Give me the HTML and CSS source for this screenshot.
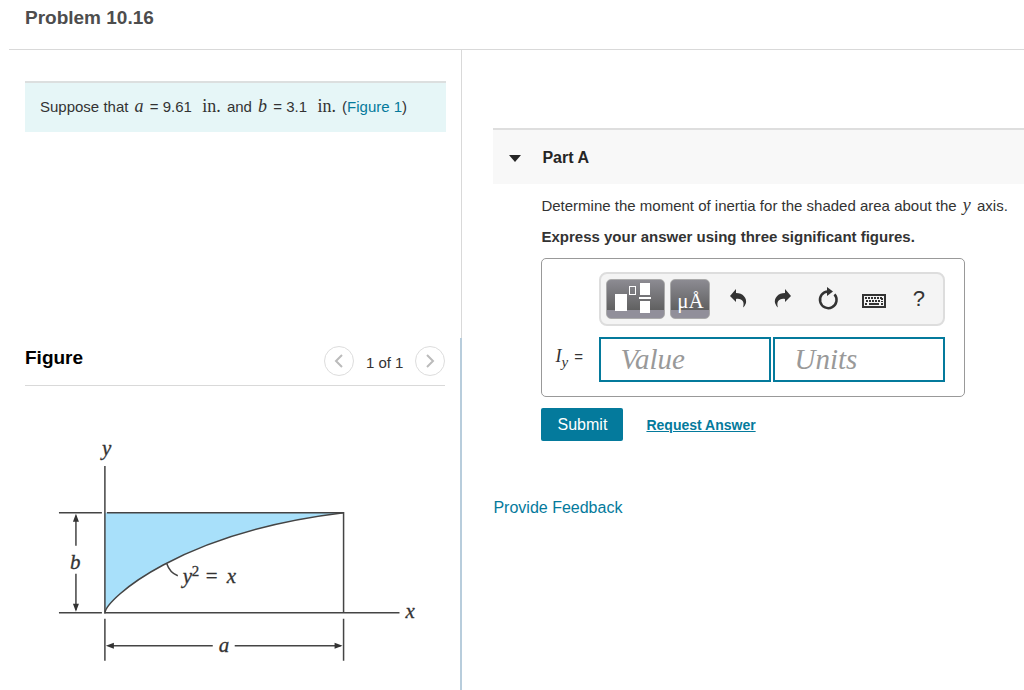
FILE: index.html
```html
<!DOCTYPE html>
<html lang="en">
<head>
    <meta charset="UTF-8">
    <meta name="viewport" content="width=device-width, initial-scale=1.0">
    <title>Problem 10.16</title>
    <link rel="stylesheet" href="styles.css">
</head>
<body>
<header class="page-header">
    <h1>Problem 10.16</h1>
</header>
<main class="columns">
    <div class="left">
        <section class="intro">
            <p class="given">Suppose that <i class="math">a</i> = 9.61 &nbsp;<span class="math">in.</span> and <i class="math">b</i> = 3.1 &nbsp;<span class="math">in.</span> (<a href="#figure">Figure 1</a>)</p>
        </section>
        <section class="figure" id="figure">
            <div class="figure-head">
                <h2>Figure</h2>
                <div class="pager">
                    <button type="button" aria-label="Previous figure">
                        <svg width="10" height="14" viewBox="0 0 10 14"><path d="M8 1L2 7l6 6"/></svg>
                    </button>
                    <span>1 of 1</span>
                    <button type="button" aria-label="Next figure">
                        <svg width="10" height="14" viewBox="0 0 10 14"><path d="M2 1l6 6-6 6"/></svg>
                    </button>
                </div>
            </div>
            <svg class="diagram" viewBox="0 0 421 290">
                <!-- shaded area above the curve -->
                <path class="area" d="M80 227C82 213 154 147 319 127H80z"/>
                <path class="curve" d="M80 227C82 213 154 147 319 127"/>
                <!-- axes and box -->
                <path class="line" d="M80 80V228M82 127H319V227M80 227H375"/>
                <!-- extension lines -->
                <path class="line" d="M34 127H77M34 227H77M80 233V275M319 233V275"/>
                <!-- dimension lines -->
                <path class="line" d="M51 130V160M51 188V224M84 260H188M210 260H316"/>
                <path class="arrow" d="M51 128l-3 8h6zM51 226l-3-8h6zM81 260l8-3v6zM318 260l-8-3v6z"/>
                <path class="curve" d="M142 178q3 9 11 12"/>
                <text x="77" y="69">y</text>
                <text x="45" y="183">b</text>
                <text x="194" y="266">a</text>
                <text x="381" y="232">x</text>
                <text x="158" y="197">y</text>
                <text class="sup" x="167" y="190">2</text>
                <text class="plain" x="181" y="197">=</text>
                <text x="202" y="197">x</text>
            </svg>
        </section>
    </div>
    <div class="right">
        <button type="button" class="part-head" aria-expanded="true">
            <span class="caret"></span>
            <span>Part A</span>
        </button>
        <form class="part-body">
            <p>Determine the moment of inertia for the shaded area about the <i class="math">y</i> axis.</p>
            <p><b>Express your answer using three significant figures.</b></p>
            <div class="answer">
                <div class="toolbar">
                    <button type="button" class="tile templates" aria-label="Templates">
                        <svg width="57" height="38" viewBox="0 0 57 38">
                            <path class="white" d="M8 14h12v17H8zM33 3h10v12H33zM32 17h12v2H32zM33 21h10v12H33z"/>
                            <rect class="outline" x="22.5" y="6.5" width="6" height="8"/>
                        </svg>
                    </button>
                    <button type="button" class="tile symbols" aria-label="Symbols">μÅ</button>
                    <div class="tools">
                        <button type="button" aria-label="Undo">
                            <svg width="24" height="24" viewBox="0 0 24 24"><path class="dark" d="M4 9L10 2V6C17 6 21 11 20 16Q19 19 17 20.5C19 15 16 11 10 12V15z"/></svg>
                        </button>
                        <button type="button" aria-label="Redo">
                            <svg width="24" height="24" viewBox="0 0 24 24"><path class="dark" d="M20 9L14 2V6C7 6 3 11 4 16Q5 19 7 20.5C5 15 8 11 14 12V15z"/></svg>
                        </button>
                        <button type="button" aria-label="Reset">
                            <svg width="24" height="24" viewBox="0 0 24 24"><path class="ring" d="M12 4.500a8.300 8.300 0 1 0 6.500 2.800"/><path class="dark" d="M11 0l6 4.500-6 4.500z"/></svg>
                        </button>
                        <button type="button" aria-label="Keyboard shortcuts">
                            <svg width="24" height="24" viewBox="0 0 24 24">
                                <rect class="frame" x="1" y="8" width="22" height="12"/>
                                <path class="keys" d="M3 11h18M4 14h14M3 17h2M19 17h2M20 11v4"/>
                                <path class="space" d="M7 17h10"/>
                            </svg>
                        </button>
                        <button type="button" class="help" aria-label="Help">?</button>
                    </div>
                </div>
                <label class="symbol" for="value"><i class="math">I<sub>y</sub></i> =</label>
                <div class="fields">
                    <input type="text" id="value" placeholder="Value">
                    <input type="text" id="units" placeholder="Units" aria-label="Units">
                </div>
            </div>
            <div class="actions">
                <button type="submit" class="submit">Submit</button>
                <a class="request" href="#">Request Answer</a>
            </div>
        </form>
        <a class="feedback" href="#">Provide Feedback</a>
    </div>
</main>
</body>
</html>
```
FILE: styles.css
```css
* {
    box-sizing: border-box;
}
body {
    margin: 0;
    min-height: 100vh;
    display: flex;
    flex-direction: column;
    font-family: "Liberation Sans", Arial, sans-serif;
    font-size: 15px;
    line-height: 20px;
    color: #333;
    background: #fff;
}
h1, h2, p {
    margin: 0;
}
button {
    font-family: inherit;
    padding: 0;
    border: none;
    background: none;
    cursor: pointer;
}
a {
    color: #047a9c;
    text-decoration: none;
}
.math {
    margin: 0 2px;
    font-family: "Liberation Serif", "Times New Roman", serif;
    font-size: 18px;
    line-height: 16px;
}
.page-header {
    margin-left: 9px;
    padding: 8px 16px 21px;
    border-bottom: 1px solid #d9d9d9;
}
.page-header h1 {
    font-size: 19px;
    line-height: 20px;
    color: #4d4d4d;
}
.columns {
    flex: 1;
    display: grid;
    grid-template-columns: 14fr 17fr;
}
.left {
    display: flex;
    flex-direction: column;
}

/* left column */
.intro {
    min-height: 288px;
    padding: 31px 15px 0 25px;
    border-right: 1px solid #d9d9d9;
}
.given {
    padding: 14px 15px 15px;
    border-top: 2px solid #dcdfdf;
    background: #e6f6f7;
}
.figure {
    flex: 1;
    padding: 0 15px 0 25px;
    border-right: 2px solid #b8cddc;
}
.figure-head {
    display: flex;
    justify-content: space-between;
    height: 48px;
    padding-top: 8px;
    border-bottom: 1px solid #d9d9d9;
}
.figure-head h2 {
    padding-top: 2px;
    font-size: 19px;
    line-height: 20px;
    color: #000;
}
.pager {
    display: flex;
    gap: 12px;
    height: 30px;
    line-height: 34px;
}
.pager button {
    display: flex;
    align-items: center;
    justify-content: center;
    width: 30px;
    height: 30px;
    border: 1px solid #ddd;
    border-radius: 50%;
}
.pager path {
    fill: none;
    stroke: #bbb;
    stroke-width: 2;
}
.diagram {
    display: block;
    width: 100%;
    font-family: "Liberation Serif", "Times New Roman", serif;
    font-size: 21px;
    font-style: italic;
}
.diagram text {
    fill: #333;
    stroke: #333;
    stroke-width: 0.3;
}
.diagram .sup {
    font-size: 15px;
    font-style: normal;
}
.diagram .plain {
    font-style: normal;
}
.area {
    fill: #a8e0fa;
}
.line, .curve {
    fill: none;
    stroke: #444;
    stroke-width: 1.5;
}
.arrow {
    fill: #333;
}

/* right column */
.right {
    padding: 78px 0 0 31px;
}
.part-head {
    display: flex;
    align-items: center;
    gap: 21px;
    width: 100%;
    height: 56px;
    padding: 2px 16px 0;
    border-top: 2px solid #dedede;
    background: #f8f8f8;
    font-size: 16px;
    font-weight: bold;
    color: #252525;
}
.caret {
    border: 6px solid transparent;
    border-top: 7px solid #252525;
    border-bottom: none;
}
.part-body {
    padding: 12px 0 0 48px;
}
.part-body p {
    margin-bottom: 11px;
}
.answer {
    display: grid;
    grid-template-columns: 57px 1fr;
    gap: 11px 0;
    max-width: 424px;
    padding: 13px 19px 14px 0;
    border: 1px solid #999;
    border-radius: 5px;
}
.toolbar {
    grid-column: 2;
    display: flex;
    align-items: center;
    gap: 5px;
    height: 54px;
    padding: 0 2px 0 5px;
    border: 2px solid #ddd;
    border-radius: 8px;
    background: #f4f4f4;
}
.tile {
    height: 40px;
    border-radius: 5px;
    border: 1px solid #aaa;
    background: linear-gradient(#8c8b92, #606060 80%, #918f9a 80%);
    color: #fff;
}
.templates {
    width: 59px;
}
.templates svg {
    display: block;
}
.symbols {
    width: 40px;
    padding-top: 4px;
    font-family: "Liberation Serif", "Times New Roman", serif;
    font-size: 21px;
}
.white {
    fill: #fff;
}
.outline {
    fill: none;
    stroke: #fff;
}
.tools {
    flex: 1;
    display: flex;
    justify-content: space-around;
    align-items: center;
}
.tools button {
    width: 24px;
    height: 24px;
}
.tools svg {
    display: block;
}
.dark {
    fill: #333;
}
.ring, .frame, .keys, .space {
    fill: none;
    stroke: #333;
    stroke-width: 2;
}
.ring {
    stroke-width: 2.5;
}
.keys {
    stroke-dasharray: 2 1;
}
.tools .help {
    font-size: 22px;
    line-height: 24px;
    color: #333;
}
.symbol {
    padding: 10px 0 0 11px;
    white-space: nowrap;
}
.symbol sub {
    font-size: 15px;
}
.fields {
    display: grid;
    grid-template-columns: 1fr 1fr;
    gap: 2px;
}
.fields input {
    width: 100%;
    height: 45px;
    padding: 0 19px;
    border: 2px solid #047a9c;
    font-family: "Liberation Serif", "Times New Roman", serif;
    font-size: 29px;
    font-style: italic;
}
.fields input::placeholder {
    color: #999;
}
.actions {
    display: flex;
    align-items: center;
    gap: 23px;
    padding-top: 11px;
}
.submit {
    width: 82px;
    height: 33px;
    border-radius: 2px;
    background: #047a9c;
    font-size: 16px;
    color: #fff;
}
.request {
    font-size: 14px;
    font-weight: bold;
    text-decoration: underline;
}
.feedback {
    display: inline-block;
    margin-top: 57px;
    font-size: 16px;
}
```
